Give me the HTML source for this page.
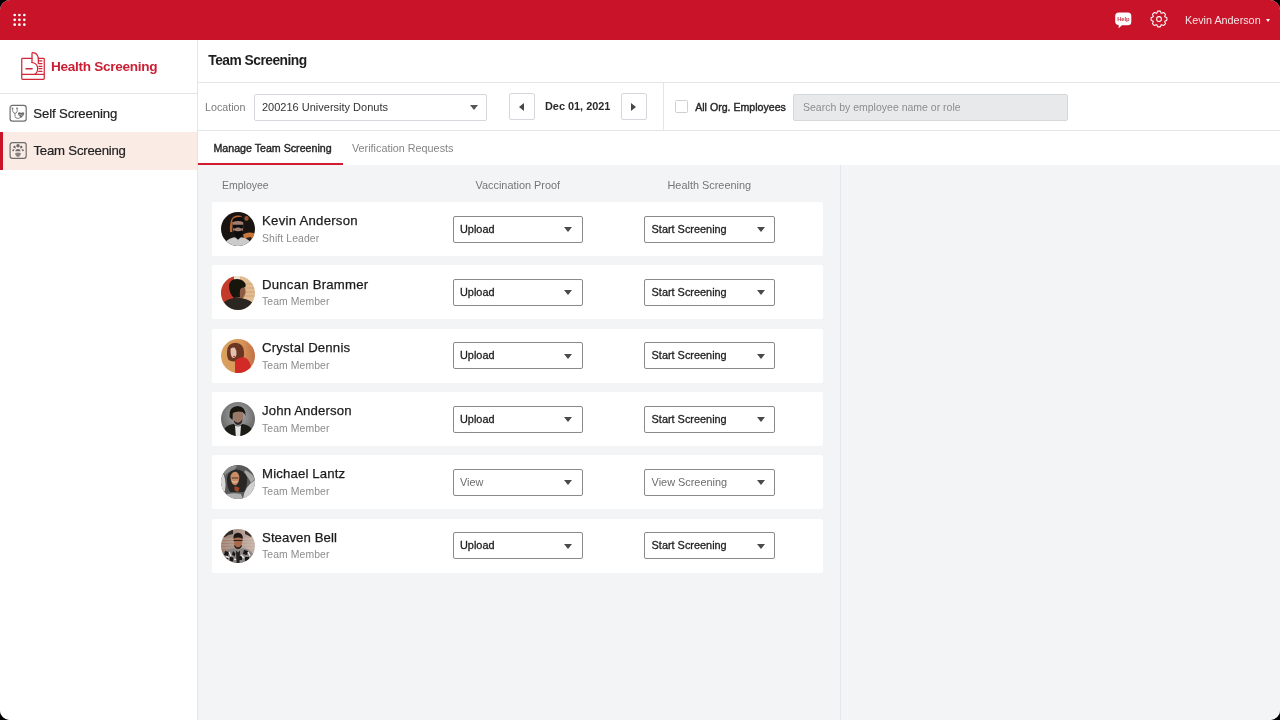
<!DOCTYPE html>
<html><head><meta charset="utf-8">
<style>
*{margin:0;padding:0;box-sizing:border-box}
html,body{width:1280px;height:720px;overflow:hidden;background:#000;font-family:"Liberation Sans",sans-serif}
#app{will-change:transform;position:absolute;left:0;top:0;width:1280px;height:720px;border-radius:10px;overflow:hidden;background:#fff}
.a{position:absolute;white-space:nowrap}
#hdr{left:0;top:0;width:1280px;height:40px;background:#C91329}
#side{left:0;top:40px;width:197px;height:680px;background:#fff}
#sideb{left:197px;top:40px;width:1px;height:680px;background:#E3E5E8}
.t{position:absolute;white-space:nowrap;line-height:1}
.dd{position:absolute;width:130.3px;height:27px;border:1.3px solid #8a8a8a;border-radius:2px;background:#fff}
.caret{position:absolute;width:0;height:0;border-left:4.2px solid transparent;border-right:4.2px solid transparent;border-top:5px solid #555}
.card{position:absolute;left:212px;width:611px;height:54px;background:#fff;border-radius:2px}
.av{position:absolute;left:221px;width:34px;height:34px;border-radius:50%;overflow:hidden}
</style></head><body>
<div id="app">
  <!-- header -->
  <div class="a" id="hdr"></div>
  <svg class="a" style="left:12px;top:12px" width="16" height="16" viewBox="0 0 16 16">
    <g fill="#fff">
      <circle cx="2.7" cy="3" r="1.35"/><circle cx="7.4" cy="3" r="1.35"/><circle cx="12.3" cy="3" r="1.35"/>
      <circle cx="2.7" cy="7.8" r="1.35"/><circle cx="7.4" cy="7.8" r="1.35"/><circle cx="12.3" cy="7.8" r="1.35"/>
      <circle cx="2.7" cy="12.7" r="1.35"/><circle cx="7.4" cy="12.7" r="1.35"/><circle cx="12.3" cy="12.7" r="1.35"/>
    </g>
  </svg>
  <div class="a" style="left:1143px;top:0;width:1px;height:40px;background:#C6122A"></div>
  <div class="a" style="left:1178px;top:0;width:1px;height:40px;background:#C6122A"></div>
  <!-- help bubble -->
  <svg class="a" style="left:1114px;top:11px" width="19" height="19" viewBox="0 0 19 19">
    <path d="M5 1.6 H13.8 Q17.3 1.6 17.3 5.1 V10.8 Q17.3 14.3 13.8 14.3 H8 L4.6 17.2 L4.8 14.2 Q1.2 13.8 1.2 10.6 V5.1 Q1.2 1.6 5 1.6 Z" fill="#fff"/>
    <text x="9.3" y="10.3" text-anchor="middle" font-family="Liberation Sans" font-weight="bold" font-size="5.9" fill="#CF3345" letter-spacing="-0.15">Help</text>
  </svg>
  <!-- gear -->
  <svg class="a" style="left:1150px;top:9.6px" width="18" height="18" viewBox="0 0 18 18">
    <path fill="none" stroke="#fff" stroke-width="1.05" stroke-linejoin="round" d="M14.80 6.82 L16.88 7.65 L16.88 10.35 L14.80 11.18 L14.65 11.56 L15.53 13.62 L13.62 15.53 L11.56 14.65 L11.18 14.80 L10.35 16.88 L7.65 16.88 L6.82 14.80 L6.44 14.65 L4.38 15.53 L2.47 13.62 L3.35 11.56 L3.20 11.18 L1.12 10.35 L1.12 7.65 L3.20 6.82 L3.35 6.44 L2.47 4.38 L4.38 2.47 L6.44 3.35 L6.82 3.20 L7.65 1.12 L10.35 1.12 L11.18 3.20 L11.56 3.35 L13.62 2.47 L15.53 4.38 L14.65 6.44 Z"/>
    <circle cx="9" cy="9" r="2.4" fill="none" stroke="#fff" stroke-width="1.05"/>
  </svg>
  <div class="t" style="left:1185px;top:14.5px;font-size:10.8px;color:#F6E3E5">Kevin Anderson</div>
  <div class="caret" style="left:1266px;top:18.5px;border-left-width:2.6px;border-right-width:2.6px;border-top:3px solid #fff"></div>

  <!-- sidebar -->
  <div class="a" id="side"></div>
  <div class="a" id="sideb"></div>
  <svg class="a" style="left:21px;top:52px" width="25" height="29" viewBox="0 0 25 29">
    <g fill="none" stroke="#D0283A" stroke-width="1.25" stroke-linejoin="round" stroke-linecap="round">
      <path d="M11 6.25 H1.5 Q0.75 6.25 0.75 7 V26.5 Q0.75 27.25 1.5 27.25 H22.5 Q23.25 27.25 23.25 26.5 V7 Q23.25 6.25 22.5 6.25 H17.3"/>
      <path d="M0.75 22.25 H23.25"/>
      <path d="M11 10.5 V1.3 Q11 0.6 11.8 0.6 Q16.6 1 17.3 6.2 V11.3"/>
      <path d="M11 10.5 Q15.4 11.3 16.5 14.8 Q17.4 19.6 14 22.25"/>
      <path d="M5 16.75 H11.2" stroke-width="1.4"/>
      <path d="M17.6 8.75 H21 M17.6 11.5 H21 M17.9 14.25 H21 M18 16.6 H21 M17.7 19.3 H21"/>
    </g>
  </svg>
  <div class="t" style="left:51px;top:59.5px;font-size:13.6px;font-weight:bold;color:#CB1F33;letter-spacing:-0.3px">Health Screening</div>
  <div class="a" style="left:0;top:93px;width:197px;height:1px;background:#E3E5E8"></div>
  <!-- self screening -->
  <svg class="a" style="left:9px;top:104px" width="19" height="19" viewBox="0 0 19 19">
    <rect x="1.1" y="1.4" width="16.1" height="15.7" rx="2.3" fill="none" stroke="#6d6d6d" stroke-width="1.2"/>
    <g fill="none" stroke="#6d6d6d" stroke-width="0.85" stroke-linecap="round">
      <path d="M3 4.2 H4.1 M7.5 4.2 H8.6"/>
      <path d="M3.6 4.3 Q3 9 6 9.4 Q9 9 8.1 4.3"/>
      <path d="M6 9.4 V12.3 Q6.3 14.6 9 14.4 Q10.6 14.2 11.6 13.3"/>
    </g>
    <path d="M12.1 13.9 L9.4 11.1 Q8.5 9.8 9.2 8.8 Q10.5 7.5 12.1 9 Q13.7 7.5 15 8.8 Q15.7 9.8 14.8 11.1 Z" fill="#6a6a6a"/>
    <path d="M9.6 10.9 H11 L11.6 9.9 L12.4 12 L13 10.9 H14.6" fill="none" stroke="#cfcfcf" stroke-width="0.5"/>
  </svg>
  <div class="t" style="left:33.3px;top:106.6px;font-size:13.2px;color:#222;letter-spacing:-0.14px;-webkit-text-stroke:0.2px #222">Self Screening</div>
  <!-- team screening active -->
  <div class="a" style="left:0;top:132px;width:197px;height:38px;background:#FBEBE5"></div>
  <div class="a" style="left:0;top:132px;width:3px;height:38px;background:#C91329"></div>
  <svg class="a" style="left:9px;top:141px" width="19" height="19" viewBox="0 0 19 19">
    <rect x="1.1" y="1.6" width="16.1" height="15.7" rx="2.3" fill="none" stroke="#6d6d6d" stroke-width="1.2"/>
    <g fill="#6a6a6a">
      <circle cx="9" cy="4.7" r="1.75"/><circle cx="5.5" cy="5.9" r="1.2"/><circle cx="12.3" cy="5.9" r="1.2"/>
      <circle cx="4.2" cy="9.3" r="0.95"/><circle cx="13.9" cy="9.3" r="0.95"/>
      <path d="M6.2 10.3 Q6.8 7.9 9 7.9 Q11.2 7.9 11.8 10.3 Z"/>
      <path d="M6.1 12 Q9 11 11.9 12 Q11.8 15.2 9 15.9 Q6.2 15.2 6.1 12 Z" opacity="0.8"/>
    </g>
    <path d="M4.8 8.8 L6.8 7.2 M13.3 8.8 L11.2 7.2" stroke="#6a6a6a" stroke-width="0.5"/>
  </svg>
  <div class="t" style="left:33.5px;top:143.5px;font-size:13.2px;color:#222;letter-spacing:-0.22px;-webkit-text-stroke:0.2px #222">Team Screening</div>

  <!-- main title -->
  <div class="t" style="left:208.3px;top:54.1px;font-size:13.8px;font-weight:bold;color:#1e1e1e;letter-spacing:-0.52px">Team Screening</div>
  <div class="a" style="left:198px;top:82px;width:1082px;height:1px;background:#E3E5E8"></div>
  <!-- filter bar -->
  <div class="t" style="left:205px;top:101.5px;font-size:10.7px;color:#7a7a7a">Location</div>
  <div class="a" style="left:254px;top:94px;width:233px;height:26.5px;border:1px solid #D4D8DD;border-radius:2px"></div>
  <div class="t" style="left:262px;top:101.5px;font-size:11px;color:#333">200216 University Donuts</div>
  <div class="caret" style="left:469.5px;top:104.5px;border-top-color:#555"></div>
  <div class="a" style="left:508.8px;top:93.4px;width:26.4px;height:26.6px;border:1px solid #D4D8DD;border-radius:2px"></div>
  <div class="a" style="left:519.4px;top:103px;width:0;height:0;border-top:4.2px solid transparent;border-bottom:4.2px solid transparent;border-right:5.4px solid #484848"></div>
  <div class="t" style="left:545px;top:101px;font-size:10.9px;font-weight:bold;color:#2a2a2a">Dec 01, 2021</div>
  <div class="a" style="left:620.8px;top:93.4px;width:26.4px;height:26.6px;border:1px solid #D4D8DD;border-radius:2px"></div>
  <div class="a" style="left:631.4px;top:103px;width:0;height:0;border-top:4.2px solid transparent;border-bottom:4.2px solid transparent;border-left:5.4px solid #484848"></div>
  <div class="a" style="left:663px;top:83px;width:1px;height:47px;background:#E3E5E8"></div>
  <div class="a" style="left:674.8px;top:100px;width:13.3px;height:13.3px;border:1px solid #CDD1D6;border-radius:1.5px"></div>
  <div class="t" style="left:695.2px;top:102px;font-size:10.6px;color:#262626;-webkit-text-stroke:0.4px #262626">All Org. Employees</div>
  <div class="a" style="left:793px;top:94px;width:275px;height:27px;background:#E8E9EA;border:1px solid #D5D8DB;border-radius:2px"></div>
  <div class="t" style="left:803px;top:101.5px;font-size:10.5px;color:#8d8d8d">Search by employee name or role</div>
  <div class="a" style="left:198px;top:130px;width:1082px;height:1px;background:#E3E5E8"></div>
  <!-- tabs -->
  <div class="t" style="left:213.5px;top:142.9px;font-size:10.65px;color:#262626;-webkit-text-stroke:0.4px #262626">Manage Team Screening</div>
  <div class="t" style="left:352px;top:142.5px;font-size:10.8px;color:#858585">Verification Requests</div>
  <div class="a" style="left:198px;top:162.7px;width:144.5px;height:2.2px;background:#D21B30"></div>

  <!-- content -->
  <div class="a" style="left:198px;top:165px;width:1082px;height:555px;background:#F3F4F6"></div>
  <div class="a" style="left:840px;top:165px;width:1px;height:555px;background:#E6E7EA"></div>
  <div class="t" style="left:222px;top:179.9px;font-size:10.5px;color:#767676">Employee</div>
  <div class="t" style="left:475.5px;top:179.9px;font-size:10.9px;color:#767676">Vaccination Proof</div>
  <div class="t" style="left:667.5px;top:179.9px;font-size:10.9px;color:#767676">Health Screening</div>

  <div id="rows">
  <div class="card" style="top:202.0px"></div>
  <div class="av" style="top:212.2px"><svg width="34" height="34" viewBox="0 0 34 34"><defs><filter id="b1" x="-20%" y="-20%" width="140%" height="140%"><feGaussianBlur stdDeviation="0.55"/></filter></defs>
<rect width="34" height="34" fill="#191411"/>
<g filter="url(#b1)">
<path d="M22 22.5 Q27 19 34 21.5 V29 Q28 27.5 23 27 Z" fill="#c9743a"/>
<path d="M25 26 L30 25 L31 28 L26 29 Z" fill="#2a1a12"/>
<ellipse cx="25.5" cy="6.5" rx="2.2" ry="2.4" fill="#94522c"/>
<path d="M9 20 Q8.2 8 12.5 4.8 Q17 2.6 21.5 4.5 Q16.5 4.8 13.5 6.8 Q11 9.5 11.2 20 Z" fill="#b66536"/>
<path d="M11.2 9.5 Q11.5 5.2 17 5.2 Q22.6 5.2 23 10 L22.2 10.6 Q17.5 8.3 12 10.6 Z" fill="#110d0b"/>
<path d="M11.6 10.2 Q17 8 22.3 10.2 L22 19 Q17 21.5 12 19 Z" fill="#a27e70"/>
<path d="M11.8 12.8 H22.2 L21.7 16.4 Q19.8 17 18.3 15.5 H15.7 Q14.2 17 12.3 16.4 Z" fill="#0d0b0b"/>
<path d="M12.6 17.8 Q12.6 25 17 25.8 Q21.4 25 21.4 17.8 Q19.2 19.5 17 19.3 Q14.8 19.5 12.6 17.8 Z" fill="#110c0a"/>
<path d="M4 30.5 Q8.5 25.5 14 25.2 L17 27.8 L20 25.2 Q25.5 25.5 30 30.5 V34 H4 Z" fill="#cbcbcb"/>
</g></svg>
</div>
  <div class="t" style="left:262px;top:214.2px;font-size:13.2px;color:#1c1c1c;letter-spacing:0.25px;-webkit-text-stroke:0.25px #1c1c1c">Kevin Anderson</div>
  <div class="t" style="left:262px;top:233.9px;font-size:10.4px;color:#8c8c8c;letter-spacing:0.1px">Shift Leader</div>
  <div class="dd" style="left:452.7px;top:215.8px"></div>
  <div class="t" style="left:460.0px;top:223.8px;font-size:10.9px;color:#1f1f1f;-webkit-text-stroke:0.3px #1f1f1f;">Upload</div>
  <div class="caret" style="left:563.8px;top:227.0px;border-top-color:#4a4a4a"></div>
  <div class="dd" style="left:644.3px;top:215.8px"></div>
  <div class="t" style="left:651.5999999999999px;top:223.8px;font-size:10.9px;color:#1f1f1f;-webkit-text-stroke:0.3px #1f1f1f;">Start Screening</div>
  <div class="caret" style="left:757.1px;top:227.0px;border-top-color:#4a4a4a"></div>
  <div class="card" style="top:265.3px"></div>
  <div class="av" style="top:275.5px"><svg width="34" height="34" viewBox="0 0 34 34"><defs><filter id="b2" x="-20%" y="-20%" width="140%" height="140%"><feGaussianBlur stdDeviation="0.6"/></filter></defs>
<rect width="34" height="34" fill="#e2bc90"/>
<g filter="url(#b2)">
<rect x="0" y="0" width="14" height="34" fill="#c33a29"/>
<rect x="13" y="0" width="6" height="3.5" fill="#ebe2d2"/>
<path d="M22 8 H34 M22 12 H34 M23 16 H34 M23 20 H34" stroke="#caa075" stroke-width="0.8"/>
<path d="M12 16 Q13 23 18 23.5 Q23 23 24.5 17 Q25 12 22 10 L16 12 Z" fill="#8c5c44"/>
<path d="M8 11 Q8 3.2 16 3 Q23.5 3 24.8 9.5 Q24.5 12 22 11.5 Q19.5 11.5 19 14 Q18.5 18 19 21 L13 22 Q8.5 18 8 11 Z" fill="#141211"/>
<path d="M2 27 Q8 22 15.5 22 Q25 21.5 32 27 V34 H2 Z" fill="#2b2521"/>
</g></svg>
</div>
  <div class="t" style="left:262px;top:277.5px;font-size:13.2px;color:#1c1c1c;letter-spacing:0.22px;-webkit-text-stroke:0.25px #1c1c1c">Duncan Brammer</div>
  <div class="t" style="left:262px;top:297.2px;font-size:10.4px;color:#8c8c8c;letter-spacing:0.1px">Team Member</div>
  <div class="dd" style="left:452.7px;top:279.1px"></div>
  <div class="t" style="left:460.0px;top:287.1px;font-size:10.9px;color:#1f1f1f;-webkit-text-stroke:0.3px #1f1f1f;">Upload</div>
  <div class="caret" style="left:563.8px;top:290.3px;border-top-color:#4a4a4a"></div>
  <div class="dd" style="left:644.3px;top:279.1px"></div>
  <div class="t" style="left:651.5999999999999px;top:287.1px;font-size:10.9px;color:#1f1f1f;-webkit-text-stroke:0.3px #1f1f1f;">Start Screening</div>
  <div class="caret" style="left:757.1px;top:290.3px;border-top-color:#4a4a4a"></div>
  <div class="card" style="top:328.6px"></div>
  <div class="av" style="top:338.8px"><svg width="34" height="34" viewBox="0 0 34 34"><defs><filter id="b3" x="-20%" y="-20%" width="140%" height="140%"><feGaussianBlur stdDeviation="0.6"/></filter><linearGradient id="g3" x1="0" x2="1"><stop offset="0" stop-color="#dba25e"/><stop offset="0.6" stop-color="#d99659"/><stop offset="1" stop-color="#c46f45"/></linearGradient></defs>
<rect width="34" height="34" fill="url(#g3)"/>
<g filter="url(#b3)">
<path d="M6 13 Q6 4 14.5 3.8 Q22.5 4 23 13 Q23.5 19 20 22 Q12 23.5 7.5 21 Q5.5 17 6 13 Z" fill="#6a3420"/>
<path d="M9.5 10 Q11 8 14 8.8 Q15.8 11.5 15.5 15.5 Q14.5 19 12 19 Q9.2 18 9.5 10 Z" fill="#e3c0ae"/>
<ellipse cx="13" cy="17.3" rx="1.2" ry="0.6" fill="#c03028"/>
<path d="M14 34 L14 22 Q18 17.5 24 18.5 Q29.5 21 30 30 L28 34 Z" fill="#d22a27"/>
</g></svg>
</div>
  <div class="t" style="left:262px;top:340.8px;font-size:13.2px;color:#1c1c1c;letter-spacing:0.18px;-webkit-text-stroke:0.25px #1c1c1c">Crystal Dennis</div>
  <div class="t" style="left:262px;top:360.5px;font-size:10.4px;color:#8c8c8c;letter-spacing:0.1px">Team Member</div>
  <div class="dd" style="left:452.7px;top:342.4px"></div>
  <div class="t" style="left:460.0px;top:350.4px;font-size:10.9px;color:#1f1f1f;-webkit-text-stroke:0.3px #1f1f1f;">Upload</div>
  <div class="caret" style="left:563.8px;top:353.6px;border-top-color:#4a4a4a"></div>
  <div class="dd" style="left:644.3px;top:342.4px"></div>
  <div class="t" style="left:651.5999999999999px;top:350.4px;font-size:10.9px;color:#1f1f1f;-webkit-text-stroke:0.3px #1f1f1f;">Start Screening</div>
  <div class="caret" style="left:757.1px;top:353.6px;border-top-color:#4a4a4a"></div>
  <div class="card" style="top:391.9px"></div>
  <div class="av" style="top:402.1px"><svg width="34" height="34" viewBox="0 0 34 34"><defs><filter id="b4" x="-20%" y="-20%" width="140%" height="140%"><feGaussianBlur stdDeviation="0.6"/></filter><radialGradient id="g4" cx="0.5" cy="0.4" r="0.62"><stop offset="0" stop-color="#b0b0b0"/><stop offset="1" stop-color="#5e5e5e"/></radialGradient></defs>
<rect width="34" height="34" fill="url(#g4)"/>
<g filter="url(#b4)">
<path d="M8.5 15 Q7.5 4.5 16.5 4 Q25 4.5 24.5 14 Q24 11 21 10 Q14 9.5 12 12 L11.5 18 Z" fill="#151311"/>
<path d="M11.8 11 Q16 8.5 21.8 10 Q23 16.5 20.5 21 Q17 23 14 21 Q11.5 17 11.8 11 Z" fill="#9a7868"/>
<path d="M12.5 18 Q17 23.5 21.5 17.5 Q21 22.5 17 23 Q13.5 22.5 12.5 18 Z" fill="#2a2420"/>
<path d="M2 29 Q5 23 12.5 22 L17 25 L21.5 22 Q29 23 32 29 V34 H2 Z" fill="#1c1a19"/>
<path d="M14 23.5 Q17 25.5 20 23.5 L19.2 34 H14.8 Z" fill="#e6e6e6"/>
</g></svg>
</div>
  <div class="t" style="left:262px;top:404.1px;font-size:13.2px;color:#1c1c1c;letter-spacing:0.13px;-webkit-text-stroke:0.25px #1c1c1c">John Anderson</div>
  <div class="t" style="left:262px;top:423.8px;font-size:10.4px;color:#8c8c8c;letter-spacing:0.1px">Team Member</div>
  <div class="dd" style="left:452.7px;top:405.7px"></div>
  <div class="t" style="left:460.0px;top:413.7px;font-size:10.9px;color:#1f1f1f;-webkit-text-stroke:0.3px #1f1f1f;">Upload</div>
  <div class="caret" style="left:563.8px;top:416.9px;border-top-color:#4a4a4a"></div>
  <div class="dd" style="left:644.3px;top:405.7px"></div>
  <div class="t" style="left:651.5999999999999px;top:413.7px;font-size:10.9px;color:#1f1f1f;-webkit-text-stroke:0.3px #1f1f1f;">Start Screening</div>
  <div class="caret" style="left:757.1px;top:416.9px;border-top-color:#4a4a4a"></div>
  <div class="card" style="top:455.2px"></div>
  <div class="av" style="top:465.4px"><svg width="34" height="34" viewBox="0 0 34 34"><defs><filter id="b5" x="-20%" y="-20%" width="140%" height="140%"><feGaussianBlur stdDeviation="0.7"/></filter></defs>
<rect width="34" height="34" fill="#5a5a5a"/>
<g filter="url(#b5)">
<path d="M0 6 Q6 12 4 26 L0 28 Z" fill="#d8d8d8"/>
<path d="M2 4 Q8 0 16 1 L13 6 Q7 6 4 11 Z" fill="#8a8a8a"/>
<path d="M22 34 Q23 22 34 15 V34 Z" fill="#cfcfcf"/>
<path d="M24 5 Q31 8 34 14 L30 18 Q27 11 23 9 Z" fill="#a8a8a8"/>
<path d="M3 30 Q11 27 20 29 L22 34 H4 Z" fill="#b0b0b0"/>
<path d="M6 18 Q5 6 14 4.5 Q23 4 26 12 Q27 21 23 27 L9 27 Q6.5 23 6 18 Z" fill="#2a2725"/>
<path d="M9.5 11 Q11 6.6 15 6.8 Q18.5 8.3 18.3 13.3 Q17.6 19.5 14.2 20.2 Q10.8 19.8 9.8 15 Z" fill="#c98c66"/>
<path d="M10.8 13 H17.5" stroke="#3a2a20" stroke-width="0.9"/>
<path d="M11 16.5 Q14 18 16.5 16.5" stroke="#f0e0d0" stroke-width="0.7" fill="none"/>
<path d="M13.5 21.5 Q17 21 18.5 23 L17.5 26.5 Q15 27 13.5 25 Z" fill="#9a4a2a"/>
</g></svg>
</div>
  <div class="t" style="left:262px;top:467.4px;font-size:13.2px;color:#1c1c1c;letter-spacing:0.15px;-webkit-text-stroke:0.25px #1c1c1c">Michael Lantz</div>
  <div class="t" style="left:262px;top:487.1px;font-size:10.4px;color:#8c8c8c;letter-spacing:0.1px">Team Member</div>
  <div class="dd" style="left:452.7px;top:469.0px"></div>
  <div class="t" style="left:460.0px;top:477.0px;font-size:10.9px;color:#6c6c6c;">View</div>
  <div class="caret" style="left:563.8px;top:480.2px;border-top-color:#4a4a4a"></div>
  <div class="dd" style="left:644.3px;top:469.0px"></div>
  <div class="t" style="left:651.5999999999999px;top:477.0px;font-size:10.9px;color:#6c6c6c;">View Screening</div>
  <div class="caret" style="left:757.1px;top:480.2px;border-top-color:#4a4a4a"></div>
  <div class="card" style="top:518.5px"></div>
  <div class="av" style="top:528.7px"><svg width="34" height="34" viewBox="0 0 34 34"><defs><filter id="b6" x="-20%" y="-20%" width="140%" height="140%"><feGaussianBlur stdDeviation="0.55"/></filter><linearGradient id="g6" x1="0" x2="1"><stop offset="0" stop-color="#9a7a6a"/><stop offset="1" stop-color="#c4b2a8"/></linearGradient></defs>
<rect width="34" height="34" fill="url(#g6)"/>
<g filter="url(#b6)">
<path d="M0 0 H12 V5 Q7 5.5 4 8 L0 8 Z" fill="#2e2a28"/>
<path d="M24 1 L32 5 L30 8 L24 5 Z" fill="#3a3230"/>
<path d="M0 10 H34 M0 13 H34 M0 16 H34 M0 19 H34" stroke="#e0d4cc" stroke-width="0.6" opacity="0.7"/>
<path d="M12.5 9.5 Q12 4 17 3.8 Q22 4 21.8 9.5 L21 10.5 Q17 8.5 13 10.5 Z" fill="#1d1918"/>
<path d="M12.8 9.5 Q17 7.5 21.3 9.5 Q21.5 15 19.5 18 Q17 20 14.5 18 Q12.5 15 12.8 9.5 Z" fill="#a86a4c"/>
<path d="M12.5 11.5 H21.5" stroke="#2a2220" stroke-width="1"/>
<path d="M13 15.5 Q17 21 21 15.5 Q21 19.5 17 20.3 Q13 19.5 13 15.5 Z" fill="#2a2220"/>
<path d="M2 25 Q6 19.5 13 19 L17 21.5 L21 19 Q28 19.5 32 25 V34 H2 Z" fill="#8a8684"/>
<path d="M4 22 L8 23 L7 27 L3 26 Z M23 21 L27 22 L26 26 L22 25 Z M9 28 L12.5 28.5 L12 32.5 L8.5 32 Z M24 28 L28 28 L28 32 L24 32 Z M12 22 L14.5 24.5 L13.5 27.5 L11 25.5 Z M18 27 L21 27 L21 31 L18 31 Z M4 29 L7 29 L7 33 L4 33 Z" fill="#161413"/>
<path d="M8 23 L10 27 M27 23 L29 27 M5 27.5 L8 28.5 M20 26 L23 29 M13 30 L16 31" stroke="#f0f0f0" stroke-width="1.3"/>
<path d="M15 21.5 L17 23.5 L19 21.5 L18.5 34 H15.5 Z" fill="#262221"/>
</g></svg>
</div>
  <div class="t" style="left:262px;top:530.7px;font-size:13.2px;color:#1c1c1c;letter-spacing:0.08px;-webkit-text-stroke:0.25px #1c1c1c">Steaven Bell</div>
  <div class="t" style="left:262px;top:550.4px;font-size:10.4px;color:#8c8c8c;letter-spacing:0.1px">Team Member</div>
  <div class="dd" style="left:452.7px;top:532.3px"></div>
  <div class="t" style="left:460.0px;top:540.3px;font-size:10.9px;color:#1f1f1f;-webkit-text-stroke:0.3px #1f1f1f;">Upload</div>
  <div class="caret" style="left:563.8px;top:543.5px;border-top-color:#4a4a4a"></div>
  <div class="dd" style="left:644.3px;top:532.3px"></div>
  <div class="t" style="left:651.5999999999999px;top:540.3px;font-size:10.9px;color:#1f1f1f;-webkit-text-stroke:0.3px #1f1f1f;">Start Screening</div>
  <div class="caret" style="left:757.1px;top:543.5px;border-top-color:#4a4a4a"></div>
  </div><!--/rows-->
</div>
</body></html>
